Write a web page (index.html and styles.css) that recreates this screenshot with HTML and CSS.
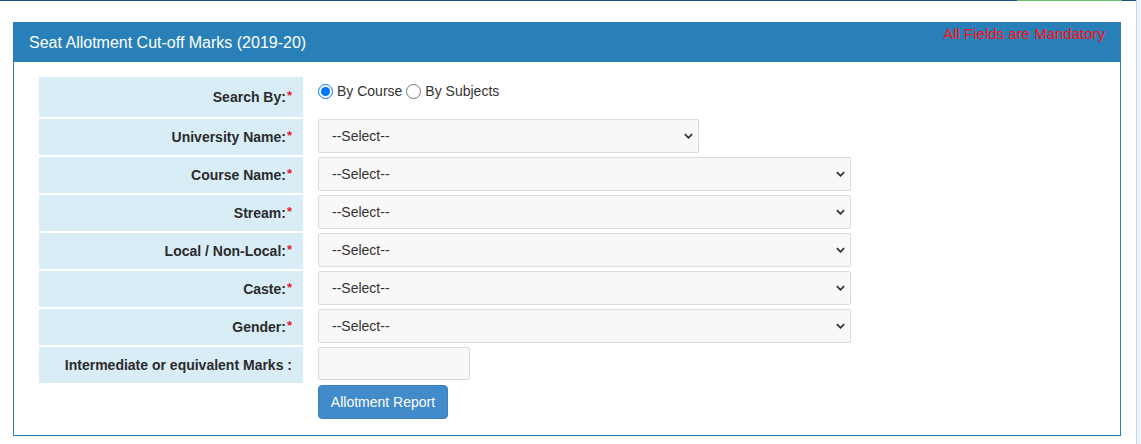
FILE: index.html
```html
<!DOCTYPE html>
<html lang="en">
<head>
<meta charset="utf-8">
<title>Seat Allotment Cut-off Marks</title>
<link rel="stylesheet" href="styles.css">
</head>
<body>
<div class="page">
  <div class="main">
    <div class="topbar"><span class="navy"></span><span class="green"></span><span class="navy"></span></div>
    <div class="panel">
      <div class="panel-head">
        <h3 class="panel-title">Seat Allotment Cut-off Marks (2019-20)</h3>
        <span class="mandatory">All Fields are Mandatory</span>
      </div>
      <div class="panel-body">
        <div class="form-grid">
          <div class="lbl lbl-first">Search By:<span class="req">*</span></div>
          <div class="val val-radio">
            <label class="radio"><input type="radio" name="by" checked> By Course</label>
            <label class="radio"><input type="radio" name="by"> By Subjects</label>
          </div>

          <div class="lbl">University Name:<span class="req">*</span></div>
          <div class="val"><div class="sel sel-short"><select><option>--Select--</option></select><svg class="chev" viewBox="0 0 10 6"><path d="M1 1 L5 5 L9 1" /></svg></div></div>

          <div class="lbl">Course Name:<span class="req">*</span></div>
          <div class="val"><div class="sel"><select><option>--Select--</option></select><svg class="chev" viewBox="0 0 10 6"><path d="M1 1 L5 5 L9 1" /></svg></div></div>

          <div class="lbl">Stream:<span class="req">*</span></div>
          <div class="val"><div class="sel"><select><option>--Select--</option></select><svg class="chev" viewBox="0 0 10 6"><path d="M1 1 L5 5 L9 1" /></svg></div></div>

          <div class="lbl">Local / Non-Local:<span class="req">*</span></div>
          <div class="val"><div class="sel"><select><option>--Select--</option></select><svg class="chev" viewBox="0 0 10 6"><path d="M1 1 L5 5 L9 1" /></svg></div></div>

          <div class="lbl">Caste:<span class="req">*</span></div>
          <div class="val"><div class="sel"><select><option>--Select--</option></select><svg class="chev" viewBox="0 0 10 6"><path d="M1 1 L5 5 L9 1" /></svg></div></div>

          <div class="lbl">Gender:<span class="req">*</span></div>
          <div class="val"><div class="sel"><select><option>--Select--</option></select><svg class="chev" viewBox="0 0 10 6"><path d="M1 1 L5 5 L9 1" /></svg></div></div>

          <div class="lbl">Intermediate or equivalent Marks :</div>
          <div class="val"><input class="txt" type="text"></div>

          <div class="empty"></div>
          <div class="val val-btn"><button class="btn" type="button">Allotment Report</button></div>
        </div>
      </div>
    </div>
  </div>
  <div class="side"></div>
</div>
</body>
</html>
```
FILE: styles.css
```css
* { box-sizing: border-box; }
html, body { margin: 0; padding: 0; background: #fff; }
body {
  font-family: "Liberation Sans", Arial, sans-serif;
  font-size: 14px;
  color: #333;
  width: 1141px;
  height: 444px;
  overflow: hidden;
}
.page { display: flex; height: 444px; }
.main { flex: 1; }
.side {
  width: 5px;
  border-left: 1px solid #b9d6f5;
  background: #f1f2f4;
}
.topbar {
  display: grid;
  grid-template-columns: 1017px 105px 1fr;
  height: 1px;
}
.topbar .navy { background: #1d4f95; }
.topbar .green { background: #6cc06c; }

.panel {
  margin: 21px 0 0 13px;
  width: 1108px;
  border: 1px solid #2b7fba;
  border-top: 0;
}
.panel-head {
  height: 40px;
  background: #2980b9;
  display: flex;
  justify-content: space-between;
  align-items: center;
  padding: 0 15px 0 15px;
}
.panel-title {
  margin: 0;
  font-size: 16px;
  font-weight: normal;
  color: #fff;
  padding-top: 2px;
}
.mandatory {
  align-self: flex-start;
  margin-top: 3px;
  font-size: 15px;
  color: #ff1010;
}
.panel-body {
  padding: 15px 0 14px 25px;
}
.form-grid {
  display: grid;
  grid-template-columns: 264px 1fr;
  grid-template-rows: 40px;
  grid-auto-rows: 36px;
  row-gap: 2px;
}
.lbl {
  background: #d9edf7;
  font-weight: bold;
  text-align: right;
  display: flex;
  align-items: center;
  justify-content: flex-end;
  padding-right: 11px;
  color: #2b2b2b;
}
.req { color: #e8202a; font-weight: bold; align-self: flex-start; margin-top: 9px; font-size: 13px; margin-left: 1px; }
.lbl-first .req { margin-top: 11px; }
.val { padding-left: 15px; }
.val-radio {
  display: flex;
  align-items: center;
  height: 20px;
  margin-top: 4px;
}
.radio {
  display: inline-flex;
  align-items: center;
  font-size: 14px;
  color: #333;
}
.radio input {
  margin: 0 4px 0 0;
  width: 15px;
  height: 15px;
}
.radio + .radio { margin-left: 4px; }
.sel {
  position: relative;
  width: 533px;
  height: 34px;
}
.sel-short { width: 381px; }
.sel select {
  appearance: none;
  -webkit-appearance: none;
  width: 100%;
  height: 34px;
  border: 1px solid #dadada;
  border-radius: 2px;
  background: #f8f8f8;
  font-family: "Liberation Sans", Arial, sans-serif;
  font-size: 14px;
  color: #333;
  padding: 0 0 0 13px;
  margin: 0;
}
.chev {
  position: absolute;
  right: 6px;
  top: 14px;
  width: 9px;
  height: 6px;
  fill: none;
  stroke: #333;
  stroke-width: 2;
}
.txt {
  width: 152px;
  height: 33px;
  border: 1px solid #dadada;
  border-radius: 2px;
  background: #f8f8f8;
  margin: 0;
  padding: 0 12px;
  font-family: "Liberation Sans", Arial, sans-serif;
  font-size: 14px;
}
.val-btn { height: 34px; }
.btn {
  display: block;
  width: 130px;
  height: 34px;
  background: #428bca;
  border: 1px solid #3a80c0;
  border-radius: 4px;
  color: #fff;
  font-family: "Liberation Sans", Arial, sans-serif;
  font-size: 14px;
  white-space: nowrap;
  padding: 0;
  margin: 0;
  text-align: center;
}
```
